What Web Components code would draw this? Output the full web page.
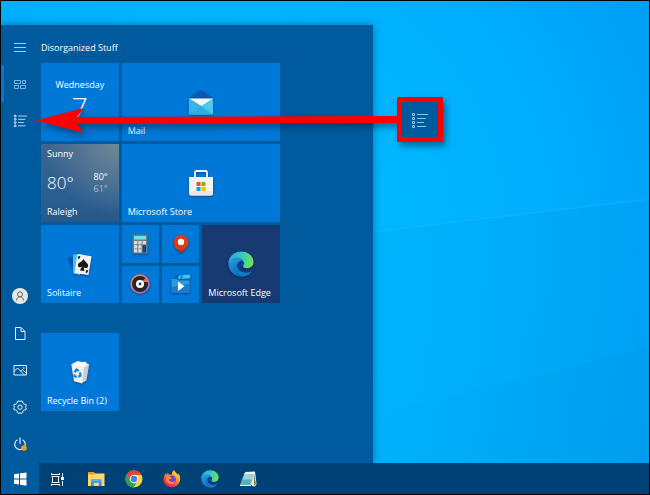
<!DOCTYPE html>
<html lang="en">
<head>
<meta charset="utf-8">
<title>Start menu</title>
<style>
  html, body { height: 100%; margin: 0; }
  body { background: #000; font: 9px/12px "Open Sans", "Noto Sans", sans-serif; color: #fff; }
</style>
</head>
<body>
<win-desktop>
  <start-menu slot="menu">
    <rail-button slot="top" label="Expand" icon="menu"></rail-button>
    <rail-button slot="top" label="Pinned tiles" icon="tiles" active></rail-button>
    <rail-button slot="top" label="All apps" icon="list"></rail-button>
    <rail-button slot="bottom" label="Account" icon="user"></rail-button>
    <rail-button slot="bottom" label="Documents" icon="document"></rail-button>
    <rail-button slot="bottom" label="Pictures" icon="picture"></rail-button>
    <rail-button slot="bottom" label="Settings" icon="gear"></rail-button>
    <rail-button slot="bottom" label="Power" icon="power"></rail-button>
    <tile-group heading="Disorganized Stuff">
      <calendar-tile day="Wednesday" date="7"></calendar-tile>
      <start-tile size="wide" label="Mail" icon="mail"></start-tile>
      <weather-tile sky="Sunny" now="80°" high="80°" low="61°" place="Raleigh"></weather-tile>
      <start-tile size="wide" label="Microsoft Store" icon="store"></start-tile>
      <start-tile label="Solitaire" icon="solitaire"></start-tile>
      <start-tile size="small" name="Calculator" icon="calculator"></start-tile>
      <start-tile size="small" name="Maps" icon="maps"></start-tile>
      <start-tile class="edge" label="Microsoft Edge" icon="edge"></start-tile>
      <start-tile size="small" name="Groove Music" icon="music"></start-tile>
      <start-tile size="small" name="Movies &amp; TV" icon="movies"></start-tile>
    </tile-group>
    <tile-group>
      <start-tile label="Recycle Bin (2)" icon="recycle"></start-tile>
    </tile-group>
  </start-menu>
  <task-bar slot="bar">
    <task-button label="Start" icon="windows" active></task-button>
    <task-button label="Task View" icon="taskview"></task-button>
    <task-button label="File Explorer" icon="folder"></task-button>
    <task-button label="Chrome" icon="chrome"></task-button>
    <task-button label="Firefox" icon="firefox"></task-button>
    <task-button label="Microsoft Edge" icon="edge"></task-button>
    <task-button label="Notepad" icon="notepad"></task-button>
  </task-bar>
  <callout-arrow slot="overlay"></callout-arrow>
</win-desktop>

<script>
const LINE = 'fill="none" stroke="currentColor"';
const ICONS = {
  menu: ['0 0 16 16', `<path ${LINE} d="M2 4.500h12M2 8.500h12M2 12.500h12"/>`],
  tiles: ['0 0 16 16', `<path ${LINE} d="M2.500 4.500h6v3h-6zM10.500 4.500h3v3h-3zM2.500 9.500h4v3h-4zM8.500 9.500h5v3h-5z"/>`],
  list: ['0 0 16 16', `<path ${LINE} d="M.5 1.500h2v2h-2zM.5 5.500h2v2h-2zM.5 9.500h2v2h-2zM.5 13.500h2v2h-2zM5 2.500h11M5 6.500h9M5 10.500h7M5 14.500h9"/>`],
  user: ['0 0 16 16', `<circle cx="8" cy="8" r="8" fill="#e9e7e6"/><g fill="none" stroke="#68625e"><circle cx="8" cy="6.300" r="2.500"/><path d="M4.500 12.500c0-5 7-5 7 0"/></g>`],
  document: ['0 0 16 16', `<path ${LINE} d="M3.500 2.500h5.500l4 4v8h-9.500zM9 2.500v4h4"/>`],
  picture: ['0 0 16 16', `<path ${LINE} d="M2 3.500h12.500v9.500H2zM2 9.500l3.500-3.500 7 7M8.500 9.500l2-2 4 4"/><circle cx="11.800" cy="6" r=".8" fill="currentColor"/>`],
  gear: ['0 0 16 16', `<path ${LINE} d="M6.700 2l.5-.2L8 3l.8-1.200 2 .7-.1 1.500 1.400 1.300 1.500-.2.8 2-1.200.9 1.200 1-.8 2-1.500-.1-1.400 1.300.1 1.500-2 .8L8 13.300l-.8 1.200-2-.8.1-1.500-1.400-1.300-1.500.1-.8-2 1.200-1-1.200-.9.8-2 1.500.2L5.300 4l-.1-1.500z"/><circle ${LINE} cx="8" cy="8.200" r="2.200"/>`],
  power: ['0 0 16 16', `<path ${LINE} stroke-width="1.200" d="M8 1.500v6.500M5.500 3.700a5.300 5.300 0 1 0 5 0"/><circle cx="12" cy="12" r="2.800" fill="#ff9a0c"/>`],
  windows: ['0 0 18 18', `<path fill="#fff" d="M3 4.200l5-.7v5H3zM9 3.300l6.500-.9v6.100H9zM3 9.500h5v5l-5-.7zM9 9.500h6.500v6.200L9 14.800z"/>`],
  taskview: ['0 0 18 18', `<path ${LINE} d="M2.500 3v2M2.500 4.500h8M10.500 3v2M3.500 7v5M9.500 7v5M2.500 6.500h8M2.500 12.500h8M2.500 16v-2M2.500 14.500h8M10.500 16v-2M13.500 3v4M13.500 11v5"/><path fill="#fff" d="M12 7h3v3h-3z"/>`],
  folder: ['0 0 18 18', `<path fill="#e2a21c" d="M1 2h6l2 2h8v4H1z"/><path fill="#ffd76a" d="M1 4.500h6l1.500-1h9V16H1z"/><path fill="#2f94dd" d="M4 16V9.500h10.500V16h-2.700v-3.200H6.700V16z"/><path fill="#57b1ed" d="M4 9.500h10.500v2H4z"/>`],
  chrome: ['0 0 18 18', `<circle cx="9" cy="9" r="8.500" fill="#ffce43"/><path fill="#e24335" d="M1.600 4.800A8.500 8.500 0 0 1 16.400 4.800L9 5 5.600 11z"/><path fill="#25a456" d="M1.600 4.800l4 6.200L9 13l3-1-3.500 5.500A8.500 8.500 0 0 1 1.600 4.800z"/><circle cx="9" cy="9" r="4.200" fill="#fff"/><circle cx="9" cy="9" r="3.200" fill="#3d82ef"/>`],
  firefox: ['0 0 18 18', `<defs><linearGradient id="a" x1=".9" y1="0" x2=".25" y2="1"><stop stop-color="#fff04d"/><stop offset=".45" stop-color="#ff9820"/><stop offset=".75" stop-color="#ff3d47"/><stop offset="1" stop-color="#e5136f"/></linearGradient></defs><path fill="url(#a)" d="M2.700 3.200l.8 1.500L5 2.800l.8 2L9 4.500C8.800 2.500 9.800 1 11 0c.4 2 2.500 2.700 4 4.800l.3-1.400c2.300 2.800 3 7-.3 10.800-3.700 4.500-10.400 4-13.200-.4C-.3 10.500.2 6.200 2.700 3.200z"/><circle cx="9" cy="9.500" r="4" fill="#7940d5"/><path fill="#ff9b24" d="M3.500 7.500C5.500 6 7.500 7 8.800 8c-1 1.200-2.500 1-3.300 1.500.6 3 4.800 3 6.700 1.200-.7 4-7.700 4.500-9-.8z"/><path fill="#ffb52b" d="M9 4.500c2.500.6 4.500 3 4 6 .8-2 .5-5-2-7z"/>`],
  edge: ['0 0 26 26', `<defs>
    <linearGradient id="a" x1="0" y1=".3" x2="1" y2=".4"><stop stop-color="#2ba8dc"/><stop offset=".5" stop-color="#35c7c7"/><stop offset="1" stop-color="#70e44d"/></linearGradient>
    <linearGradient id="b" x1="0" y1="0" x2=".5" y2="1"><stop stop-color="#28a6e5"/><stop offset="1" stop-color="#0a65b9"/></linearGradient></defs>
    <path fill="url(#b)" d="M.5 12C1 6 7 3 12 5.500c4 2 5 5.500 4 8-2 1-4 2-3.500 4.500 1 4 7 5 11 2-2 3.500-6 5.700-10 5.700C6 25.700.3 20 .5 12z"/>
    <path fill="#1478c8" d="M8 13.500c-1.500 5 2 11 8 12 3.500-.6 6-2.500 7.800-5.500-4 2.500-10 1.500-11.500-2.500-1-2.500.5-4 .8-5-1.200-1.500-4-1.300-5.100 1z"/>
    <path fill="#0c3f86" d="M15.800 13c.5-2.500-2-3.800-4-2.800-2.500 1.300-3.300 4.300-2 7 1.800 3.600 6.500 5.300 11.500 3.800-4.500.3-8-2-8.300-4.500-.1-1.500 1-2.500 2.800-3.500z"/>
    <path fill="url(#a)" d="M.5 12C1 5 6.500.4 13 .4c7.500 0 12.500 5 12.500 10.600 0 4-3 6.200-6.500 6.200-2.500 0-4-.8-4-1.700 0-.8 1.200-1.200 1.200-3.200 0-3-3-5.800-7-5.800C5 6.500 2 8.500.5 12z"/>`],
  notepad: ['0 0 18 18', `<path fill="#eff3f3" d="M6 2l10-.5L17.500 14 16 16.500 13 16z"/><path fill="#8d7456" d="M14.800 3L17 13.500l-2 2.500z"/><path fill="#9ad3d9" d="M5.500 3h10L12 15.500H1z"/><path fill="#5bafb9" d="M3 9.500h9.500L11 15.500H1z"/><path stroke="#e9fbfc" stroke-width="1" d="M5.500 3.500h10M1 15.500h11"/>`],
  mail: ['0 0 26 26', `<path fill="#0a58b0" d="M1 9L13 1l12 8v2H1z"/><path fill="#f4f6f8" d="M1 9.500h24v8H1z"/><path fill="#2aa6e2" d="M1 9.500l12 7.500 12 8.500H1z"/><path fill="#4cc9f2" d="M1 25.500L13 17 25 9.500v16z"/><path fill="#37b5e8" d="M1 9.500l12 7.500L1 25.500z"/><path fill="#219bdb" d="M13 17l12 8.500H1z" opacity=".6"/>`],
  store: ['0 0 26 26', `<path fill="none" stroke="#fff" stroke-width="1.800" d="M7 8V2.500Q7 1 8.500 1h9Q19 1 19 2.500V8"/><path fill="#f5f4f3" d="M1 7h24v16.500q0 2-2 2H3q-2 0-2-2z"/><path fill="#e8e5e4" d="M1 21h24v2.500q0 2-2 2H3q-2 0-2-2z"/><path fill="#f25022" d="M8.500 12h4v4h-4z"/><path fill="#7fba00" d="M13.500 12h4v4h-4z"/><path fill="#00a4ef" d="M8.500 17h4v4h-4z"/><path fill="#ffb900" d="M13.500 17h4v4h-4z"/>`],
  solitaire: ['0 0 26 26', `<path fill="#0753aa" d="M1 7l6-2 2 17z"/><path fill="#47bff1" d="M6 3.500l9-.5-2 21-7-1.500z"/><path fill="#f5f3f1" d="M10.500 3l14 2.300-3 18.700-14-2z"/><path fill="#191919" d="M16.500 8c2 4 5.500 4 4.500 7.500-.8 2.300-3.500 1.800-4.300.5l.7 4-4.500-.6 2-3.800c-1.300 1.300-4 1-4-1.300 0-3 4-3 5.600-6.300z"/><path fill="#191919" d="M11.500 5l2 .3-1.500 3-1.300-1zM19.500 19l2 .5-1.700 2.700-1.300-1z"/>`],
  calculator: ['0 0 22 22', `<path fill="#717c82" d="M3.500 1.500h15v19h-15z"/><path fill="#67e4f5" d="M5 3h12v3.500H5z"/><path fill="#d8dde0" d="M5 8h3.300v3.300H5zM9.300 8h3.300v3.300H9.300zM13.600 8H17v3.300h-3.400zM5 12.200h3.300v3.300H5zM9.300 12.200h3.300v3.300H9.300zM5 16.300h3.300v3.200H5zM9.300 16.300h3.300v3.200H9.300z"/><path fill="#09478e" d="M13.600 12.200H17v7.300h-3.400z"/>`],
  maps: ['0 0 22 22', `<path fill="#b73119" d="M5 14l6 6.500 6-6.500z"/><circle cx="11" cy="9.500" r="7.500" fill="#db3d13"/><circle cx="11" cy="9" r="3.200" fill="#fff"/>`],
  music: ['0 0 22 22', `<defs><linearGradient id="a" x2="1" y2="1"><stop stop-color="#ff9145"/><stop offset="1" stop-color="#9a65d1"/></linearGradient></defs><circle cx="11" cy="11" r="9.700" fill="url(#a)"/><circle cx="11" cy="11" r="8" fill="#24272c"/><path stroke="#ed6f56" stroke-width="1.800" d="M14 9l4-4M15 8h4"/><circle cx="11" cy="11" r="4" fill="#fff"/><circle cx="11" cy="11" r="1.400" fill="#343434"/>`],
  movies: ['0 0 22 22', `<path fill="#0c5fb4" d="M5 3l15-1.500V17H5z"/><path fill="#38ccef" d="M9 2.600l11-1.100v3.700L8 6z"/><path fill="#1685d1" d="M11 2.400l2.500-.2L12 5.700l-2.500.2z"/><path fill="#2a9be2" d="M1.500 6h5l2 1.500h11V20h-18z"/><path fill="#1068bd" d="M1.500 14l18-3v9h-18z" opacity=".6"/><path fill="#fff" d="M8 8.500l6.500 4.700L8 18z"/>`],
  recycle: ['0 0 26 26', `<path fill="#f5f5f4" d="M4.500 4l6-3 5 1.500 3-1 4 4-2 3H6z"/><path fill="#c9cecf" d="M17 5l6-.5-3 18-6 3z"/><path fill="#eef0f1" d="M3.500 4.500l14 2.500-2 18.500-9-2.500z"/><path fill="#fff" d="M4 4l7 1 5-3 3 3 4-.5-5.500 3z"/><path fill="none" stroke="#1684d1" stroke-width="2.400" d="M7 13.500l2.200-3.200 2.500 1.600M13 13.500l.5 3.500-2.500 1M9.500 18.500L7 17.500l.2-2"/>`]
};

class Base extends HTMLElement {
  attr(n) { return (this.getAttribute(n) || '').replace(/&/g, '&amp;'); }
  connectedCallback() {
    if (!this.shadowRoot) this.attachShadow({ mode: 'open' }).innerHTML =
      `<style>*{box-sizing:border-box}button{font:inherit;color:inherit;border:0;margin:0;padding:0;text-align:left}${this.css()}</style>${this.html()}`;
  }
}

customElements.define('app-icon', class extends Base {
  css() { return ':host{display:block}svg{display:block;width:100%;height:100%;overflow:visible}'; }
  html() {
    const [box, art] = ICONS[this.attr('name')];
    return `<svg viewBox="${box}" aria-hidden="true">${art}</svg>`;
  }
});

customElements.define('win-desktop', class extends Base {
  css() { return `
    :host{display:flex;flex-direction:column;position:relative;box-sizing:border-box;min-height:100vh;border:1px solid #000;overflow:hidden;isolation:isolate}
    .wall{position:absolute;inset:0;width:100%;height:100%;z-index:-1}
    main{flex:1;display:flex;padding-top:24px}`; }
  html() { return `
    <svg class="wall" viewBox="0 0 648 493" preserveAspectRatio="none" aria-hidden="true">
      <defs>
        <radialGradient id="g" gradientUnits="userSpaceOnUse" cx="210" cy="235" r="520"><stop offset=".35" stop-color="#00b7ff"/><stop offset=".65" stop-color="#00aefd"/><stop offset="1" stop-color="#009cf5"/></radialGradient>
        <linearGradient id="s" x1="0" x2="1"><stop stop-color="#00b2fa" stop-opacity=".6"/><stop offset="1" stop-color="#00a0f2" stop-opacity=".6"/></linearGradient>
        <linearGradient id="t" x1="0" x2="1"><stop stop-color="#00acf4" stop-opacity=".1"/><stop offset="1" stop-color="#009aea" stop-opacity=".5"/></linearGradient>
      </defs>
      <path fill="url(#g)" d="M0 0h648v493H0z"/>
      <path fill="url(#s)" d="M372 231L648 199v294H372z"/>
      <path fill="#30c0ff" fill-opacity=".22" d="M372 230L648 197v2L372 232z"/>
      <path fill="url(#t)" d="M372 414Q530 376 648 346v147H372z"/>
    </svg>
    <main><slot name="menu"></slot></main><slot name="bar"></slot><slot name="overlay"></slot>`; }
});

customElements.define('start-menu', class extends Base {
  css() { return `
    :host{display:flex;width:372px;max-width:100%;background:#005a9e;box-shadow:0 0 8px rgba(0,50,90,.5)}
    nav{width:38px;flex:none;display:flex;flex-direction:column;justify-content:space-between;padding:3px 0 1px}
    section{flex:1;display:flex;flex-direction:column;gap:30px;padding:17px 2px}`; }
  html() { return `<nav aria-label="Start"><div><slot name="top"></slot></div><div><slot name="bottom"></slot></div></nav><section><slot></slot></section>`; }
});

customElements.define('rail-button', class extends Base {
  css() { return `
    :host{display:block}
    button{display:flex;align-items:center;justify-content:center;width:100%;height:37px;background:none;border-left:3px solid transparent;border-right:3px solid transparent;color:#e4f0fa}
    :host([active]) button{border-left-color:#0078d7;color:#78b6e6}
    app-icon{width:16px;height:16px}
    :host([icon=list]) app-icon{width:13px;height:13px}
    :host([icon=menu]) app-icon{color:#a9cbe6}`; }
  html() { return `<button aria-label="${this.attr('label')}"><app-icon name="${this.attr('icon')}"></app-icon></button>`; }
});

customElements.define('tile-group', class extends Base {
  css() { return `
    :host{display:block}
    h2{font:inherit;margin:0 0 9px}
    .grid{display:grid;grid-template-columns:repeat(6,1fr);max-width:239px;gap:3px;grid-auto-flow:dense}
    ::slotted(*){grid-column:span 2;grid-row:span 2;min-height:78px}
    ::slotted([size=wide]){grid-column:span 4}
    ::slotted([size=small]){grid-column:span 1;grid-row:span 1;min-height:37px}`; }
  html() { return `${this.hasAttribute('heading') ? `<h2>${this.attr('heading')}</h2>` : ''}<div class="grid"><slot></slot></div>`; }
});

customElements.define('start-tile', class extends Base {
  css() { return `
    :host{display:grid;background:#0078d7}
    :host(.edge){background:#173a72}
    button{display:grid;background:none;width:100%;height:100%;min-width:0}
    app-icon,span{grid-area:1/1}
    app-icon{width:26px;height:26px;place-self:center;filter:drop-shadow(0 1px 1px rgba(0,20,60,.45))}
    :host([size=small]) app-icon{width:22px;height:22px}
    :host([icon=recycle]) app-icon{width:24px;height:24px}
    span{place-self:end start;padding:0 0 4px 6px;white-space:nowrap}`; }
  html() {
    const label = this.attr('label');
    return `<button aria-label="${label || this.attr('name')}"><app-icon name="${this.attr('icon')}"></app-icon>${label ? `<span>${label}</span>` : ''}</button>`;
  }
});

customElements.define('calendar-tile', class extends Base {
  css() { return `
    :host{display:grid;background:#0078d7}
    button{display:flex;flex-direction:column;align-items:center;justify-content:flex-start;background:none;padding-top:16px}
    b{font-weight:300;font-size:28px;line-height:32px}`; }
  html() { return `<button><span>${this.attr('day')}</span><b>${this.attr('date')}</b></button>`; }
});

customElements.define('weather-tile', class extends Base {
  css() { return `
    :host{display:grid;background:radial-gradient(circle at 100% 0,#6f8798,transparent 65%),linear-gradient(#3f668c,#2b5f92 60%,#28588a)}
    button{display:flex;flex-direction:column;justify-content:space-between;background:none;padding:4px 11px 4px 6px}
    div{display:flex;align-items:center;justify-content:space-between}
    b{font-weight:300;font-size:17px;line-height:24px}
    i{font-style:normal;display:block}
    .low{color:#a9bfd2}`; }
  html() { return `<button><span>${this.attr('sky')}</span><div><b>${this.attr('now')}</b><span><i>${this.attr('high')}</i><i class="low">${this.attr('low')}</i></span></div><span>${this.attr('place')}</span></button>`; }
});

customElements.define('task-bar', class extends Base {
  css() { return ':host{display:flex;height:31px;background:#004275;position:relative}'; }
  html() { return '<slot></slot>'; }
});

customElements.define('task-button', class extends Base {
  css() { return `
    :host{display:grid;width:38px}
    :host([active]){background:#005a9e}
    button{display:grid;place-items:center;background:none}
    app-icon{width:18px;height:18px;color:#e4f0fa}`; }
  html() { return `<button aria-label="${this.attr('label')}"><app-icon name="${this.attr('icon')}"></app-icon></button>`; }
});

customElements.define('callout-arrow', class extends Base {
  css() { return `
    :host{position:absolute;left:35px;top:96px;display:flex;align-items:center;filter:drop-shadow(3px 4px 3px rgba(0,30,60,.5));pointer-events:none}
    svg{display:block;width:361px;height:29px}
    div{display:grid;place-items:center;width:46px;height:45px;border:5px solid #f00;background:#005a9e;color:#8dc3ee}
    app-icon{width:16px;height:16px}`; }
  html() { return `<svg viewBox="0 0 361 29" aria-hidden="true"><path fill="#f00" d="M0 15.500L48 3 41 12 361 11V18L41 19 48 28z"/></svg><div><app-icon name="list"></app-icon></div>`; }
});
</script>
</body>
</html>
